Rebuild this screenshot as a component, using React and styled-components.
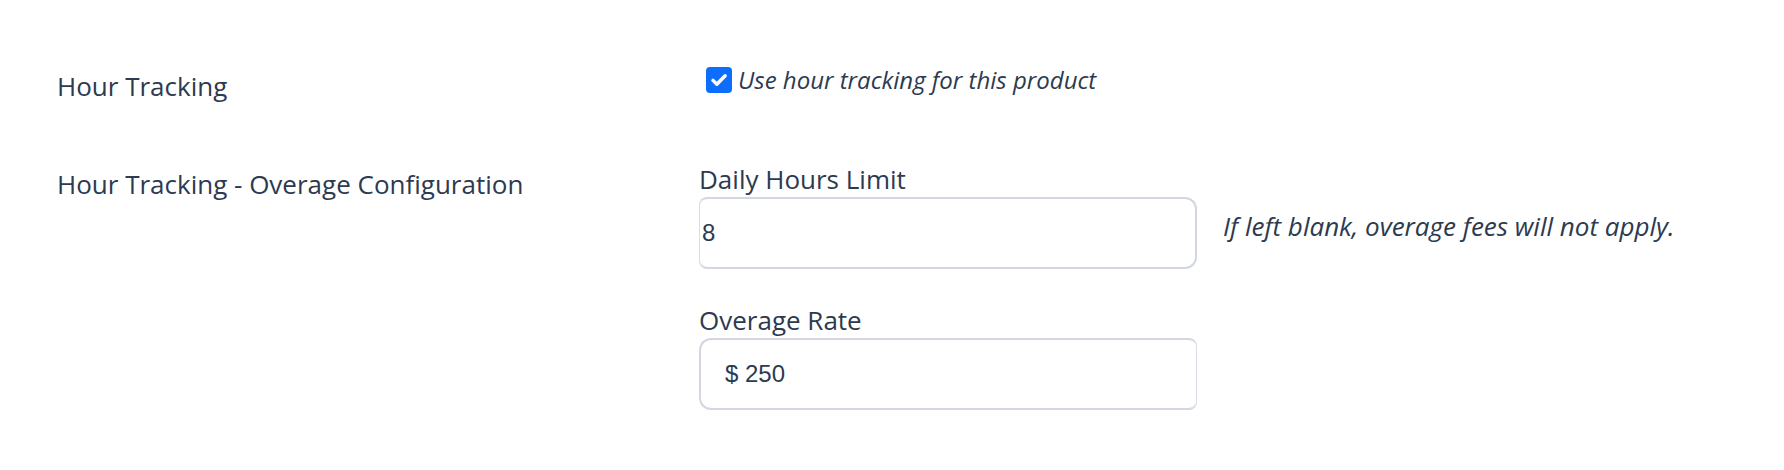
import React, { useState } from 'react'
import styled, { createGlobalStyle } from 'styled-components'

const GlobalStyle = createGlobalStyle`
  html, body {
    margin: 0;
    padding: 0;
    background: #fff;
  }
  body {
    font-family: "Open Sans", "Noto Sans", sans-serif;
    color: #2d3a4f;
  }
`

const Form = styled.form`
  padding: 60px 0 40px 57px;
  font-size: 26px;
  line-height: 39px;
`

const Row = styled.div`
  display: grid;
  grid-template-columns: 642px 1fr;
  margin-top: ${p => p.$gap || 0}px;
`

const RowLabel = styled.div`
  padding-top: ${p => p.$offset || 0}px;
`

const Fields = styled.div`
  display: flex;
  flex-direction: column;
`

const CheckLine = styled.label`
  display: flex;
  align-items: center;
  gap: 6px;
  cursor: pointer;
`

const Box = styled.span`
  display: inline-flex;
  align-items: center;
  justify-content: center;
  width: 26px;
  height: 26px;
  margin-left: 7px;
  border-radius: 4px;
  background: ${p => (p.$checked ? '#0d6efd' : '#fff')};
  border: ${p => (p.$checked ? 'none' : '2px solid #c9cfd9')};
  box-sizing: border-box;
`

const HiddenInput = styled.input`
  display: none;
`

const Italic = styled.span`
  font-style: italic;
  font-size: 24px;
`

const FieldLabel = styled.div`
  line-height: 28px;
  margin-top: ${p => p.$gap || 0}px;
  margin-bottom: 4px;
`

const InputRow = styled.div`
  display: flex;
  align-items: flex-start;
  gap: 26px;
`

const TextInput = styled.input`
  box-sizing: border-box;
  width: 498px;
  height: 72px;
  font-family: "Liberation Sans", Arial, sans-serif;
  font-size: 24px;
  color: #2d3a4f;
  background: #fff;
  outline: none;
  border: 2px solid #d3d7e0;
  ${p =>
    p.$open === 'left'
      ? `
    border-left: none;
    border-radius: 8px 12px 12px 8px;
    padding: 0 0 0 3px;
    box-shadow: inset 1px 0 0 #dadde5;
  `
      : `
    border-right: none;
    border-radius: 12px 8px 8px 12px;
    padding: 0 0 0 24px;
    box-shadow: inset -1px 0 0 #dadde5;
  `}
`

const Help = styled.div`
  font-style: italic;
  margin-top: 10px;
  white-space: nowrap;
`

function Check() {
  return (
    <svg width="20" height="20" viewBox="0 0 16 16">
      <path
        d="M3.2 8.3l3.1 3.1L12.9 4.6"
        fill="none"
        stroke="#fff"
        strokeWidth="2.8"
        strokeLinecap="round"
        strokeLinejoin="round"
      />
    </svg>
  )
}

export default function App() {
  const [tracking, setTracking] = useState(true)
  const [limit, setLimit] = useState('8')
  const [rate, setRate] = useState('$ 250')

  return (
    <>
      <GlobalStyle />
      <Form onSubmit={e => e.preventDefault()}>
        <Row>
          <RowLabel $offset={7}>Hour Tracking</RowLabel>
          <Fields>
            <CheckLine>
              <HiddenInput
                type="checkbox"
                checked={tracking}
                onChange={e => setTracking(e.target.checked)}
              />
              <Box $checked={tracking}>{tracking && <Check />}</Box>
              <Italic>Use hour tracking for this product</Italic>
            </CheckLine>
          </Fields>
        </Row>

        <Row $gap={59}>
          <RowLabel>Hour Tracking - Overage Configuration</RowLabel>
          <Fields>
            <FieldLabel>Daily Hours Limit</FieldLabel>
            <InputRow>
              <TextInput
                $open="left"
                value={limit}
                onChange={e => setLimit(e.target.value)}
              />
              <Help>If left blank, overage fees will not apply.</Help>
            </InputRow>

            <FieldLabel $gap={37}>Overage Rate</FieldLabel>
            <InputRow>
              <TextInput
                $open="right"
                value={rate}
                onChange={e => setRate(e.target.value)}
              />
            </InputRow>
          </Fields>
        </Row>
      </Form>
    </>
  )
}
